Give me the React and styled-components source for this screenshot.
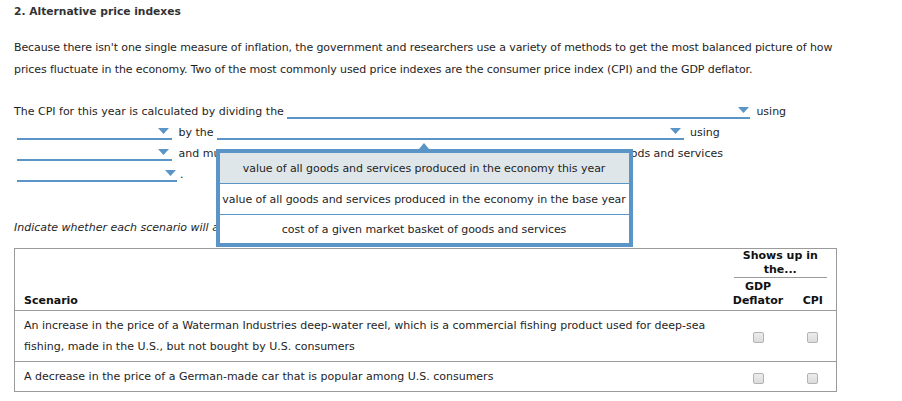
import React from 'react';
import styled, { createGlobalStyle } from 'styled-components';

const GlobalStyle = createGlobalStyle`
  body {
    margin: 0;
    background: #fff;
    font-family: "DejaVu Sans", Verdana, sans-serif;
    font-size: 11px;
    color: #1e1e1e;
  }
`;

const BLUE = '#5b94c7';

const Page = styled.div`
  padding: 1px 14px 0;
  width: 822px;
`;

const Title = styled.h2`
  margin: 0;
  font-size: 10.7px;
  line-height: 22px;
  font-weight: bold;
  color: #333;
`;

const Intro = styled.p`
  margin: 14px 0 0;
  line-height: 22px;
  letter-spacing: -0.1px;
`;

const Fill = styled.div`
  margin-top: 20px;
`;

const Line = styled.div`
  line-height: 21px;
  white-space: nowrap;
`;

const SelectBox = styled.span`
  position: relative;
  display: inline-block;
  width: ${(p) => p.$w}px;
  height: 14px;
  margin: 0 3px;
  border-bottom: 2px solid ${BLUE};
  vertical-align: -4px;
`;

const Arrow = styled.svg`
  position: absolute;
  right: ${(p) => p.$right}px;
  bottom: 4px;
  width: 11px;
  height: 6px;
`;

const Popup = styled.div`
  position: absolute;
  left: -1px;
  top: 25px;
  width: 417px;
  box-sizing: border-box;
  border: 4px solid ${BLUE};
  background: #fff;
  z-index: 5;
  line-height: normal;
`;

const Caret = styled.svg`
  position: absolute;
  left: 199px;
  top: -10px;
  width: 10px;
  height: 6px;
`;

const Option = styled.div`
  height: ${(p) => (p.$last ? 28 : 30)}px;
  display: flex;
  align-items: center;
  justify-content: center;
  white-space: nowrap;
  letter-spacing: -0.05px;
  color: #1e1e1e;
  background: ${(p) => (p.$active ? '#dee6ea' : '#fff')};
  border-bottom: ${(p) => (p.$last ? 'none' : `1px solid ${BLUE}`)};
`;

const Instruction = styled.p`
  margin: 32px 0 0;
  line-height: 21px;
  font-style: italic;
`;

const Table = styled.table`
  margin-top: 10px;
  width: 822px;
  table-layout: fixed;
  border-collapse: collapse;
  border: 1px solid #9b9b9b;
  font-size: 11px;
`;

const HeadRow = styled.tr`
  line-height: 14px;
`;

const Th = styled.th`
  padding: ${(p) => p.$pad || '0'};
  text-align: ${(p) => p.$align || 'center'};
  vertical-align: bottom;
  font-weight: bold;
  color: #111;
  border-bottom: ${(p) => (p.$rule ? '1px solid #9b9b9b' : 'none')};
`;

const GroupLabel = styled.div`
  margin: 0 9px 0 7px;
  border-bottom: 1px solid #9b9b9b;
`;

const Row = styled.tr`
  border-top: 1px solid #9b9b9b;
`;

const Td = styled.td`
  padding: ${(p) => p.$pad || '4px 10px 4px 9px'};
  line-height: 21px;
  text-align: ${(p) => p.$align || 'left'};
  vertical-align: middle;
`;

const Check = styled.span`
  display: inline-block;
  width: 11px;
  height: 11px;
  box-sizing: border-box;
  margin-top: ${(p) => p.$dy || 0}px;
  border: 1px solid #b3b3b3;
  border-radius: 2px;
  background: linear-gradient(#ececec, #dcdcdc);
  vertical-align: middle;
`;

const Select = ({ w, right = 2, children }) => (
  <SelectBox $w={w}>
    <Arrow $right={right} viewBox="0 0 11 6">
      <polygon points="0,0 11,0 5.5,6" fill={BLUE} />
    </Arrow>
    {children}
  </SelectBox>
);

const options = [
  'value of all goods and services produced in the economy this year',
  'value of all goods and services produced in the economy in the base year',
  'cost of a given market basket of goods and services',
];

const scenarios = [
  {
    text: 'An increase in the price of a Waterman Industries deep-water reel, which is a commercial fishing product used for deep-sea fishing, made in the U.S., but not bought by U.S. consumers',
    dy: 2,
  },
  {
    text: 'A decrease in the price of a German-made car that is popular among U.S. consumers',
    dy: 2,
  },
];

export default function App() {
  return (
    <Page>
      <GlobalStyle />
      <Title>2. Alternative price indexes</Title>
      <Intro>
        Because there isn't one single measure of inflation, the government and researchers use a variety of methods to get the most balanced picture of how prices fluctuate in the economy. Two of the most commonly used price indexes are the consumer price index (CPI) and the GDP deflator.
      </Intro>

      <Fill>
        <Line>
          The CPI for this year is calculated by dividing the<Select w={463} right={1} /> using
        </Line>
        <Line>
          <Select w={155} right={3} /> by the<Select w={467} right={3}>
            <Popup>
              <Caret viewBox="0 0 10 6">
                <polygon points="0,6 5,0 10,6" fill={BLUE} />
              </Caret>
              {options.map((o, i) => (
                <Option key={o} $active={i === 0} $last={i === options.length - 1}>
                  {o}
                </Option>
              ))}
            </Popup>
          </Select> using
        </Line>
        <Line>
          <Select w={155} right={3} /> and multiplying the result by 100, to express it relative to the cost of the same goods and services
        </Line>
        <Line>
          <Select w={160} right={1} />.
        </Line>
      </Fill>

      <Instruction>
        Indicate whether each scenario will affect the GDP deflator, the CPI, or both.
      </Instruction>

      <Table>
        <colgroup>
          <col style={{ width: 712 }} />
          <col style={{ width: 63 }} />
          <col style={{ width: 47 }} />
        </colgroup>
        <thead>
          <HeadRow>
            <Th rowSpan={2} $align="left" $pad="0 10px 2px 9px" $rule>
              Scenario
            </Th>
            <Th colSpan={2}>
              <GroupLabel>
                Shows up in
                <br />
                the...
              </GroupLabel>
            </Th>
          </HeadRow>
          <HeadRow>
            <Th $pad="2px 0 2px 0" $rule>
              GDP
              <br />
              Deflator
            </Th>
            <Th $pad="2px 0 2px 0" $rule>
              CPI
            </Th>
          </HeadRow>
        </thead>
        <tbody>
          {scenarios.map((s) => (
            <Row key={s.text}>
              <Td>{s.text}</Td>
              <Td $align="center" $pad="0">
                <Check $dy={s.dy} />
              </Td>
              <Td $align="center" $pad="0">
                <Check $dy={s.dy} />
              </Td>
            </Row>
          ))}
        </tbody>
      </Table>
    </Page>
  );
}
